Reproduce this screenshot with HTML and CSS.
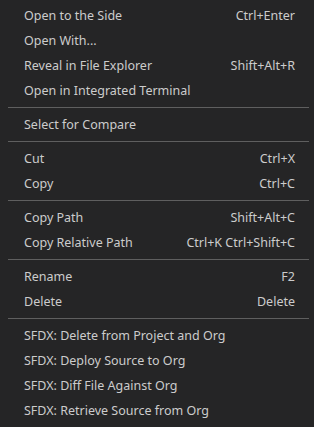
FILE: index.html
```html
<!DOCTYPE html>
<html>
<head>
<meta charset="utf-8">
<link rel="stylesheet" href="styles.css">
</head>
<body>
<div class="menu">
  <div class="item"><span class="label">Open to the Side</span><span class="key">Ctrl+Enter</span></div>
  <div class="item"><span class="label">Open With...</span></div>
  <div class="item"><span class="label">Reveal in File Explorer</span><span class="key">Shift+Alt+R</span></div>
  <div class="item"><span class="label">Open in Integrated Terminal</span></div>
  <div class="sep"></div>
  <div class="item"><span class="label">Select for Compare</span></div>
  <div class="sep"></div>
  <div class="item"><span class="label">Cut</span><span class="key">Ctrl+X</span></div>
  <div class="item"><span class="label">Copy</span><span class="key">Ctrl+C</span></div>
  <div class="sep"></div>
  <div class="item"><span class="label">Copy Path</span><span class="key">Shift+Alt+C</span></div>
  <div class="item"><span class="label">Copy Relative Path</span><span class="key">Ctrl+K Ctrl+Shift+C</span></div>
  <div class="sep"></div>
  <div class="item"><span class="label">Rename</span><span class="key">F2</span></div>
  <div class="item"><span class="label">Delete</span><span class="key">Delete</span></div>
  <div class="sep"></div>
  <div class="item"><span class="label">SFDX: Delete from Project and Org</span></div>
  <div class="item"><span class="label">SFDX: Deploy Source to Org</span></div>
  <div class="item"><span class="label">SFDX: Diff File Against Org</span></div>
  <div class="item"><span class="label">SFDX: Retrieve Source from Org</span></div>
</div>
</body>
</html>
```

FILE: styles.css
```css
html, body {
  margin: 0;
  padding: 0;
  background: #252526;
}
body {
  width: 314px;
  height: 427px;
  overflow: hidden;
}
.menu {
  display: flex;
  flex-direction: column;
  padding: 3px 0 4px 0;
  font-family: "Noto Sans", "Open Sans", sans-serif;
  font-size: 12.5px;
  color: #cccccc;
}
.item {
  height: 25px;
  display: flex;
  align-items: center;
  justify-content: space-between;
  padding: 0 19px 0 24px;
  white-space: nowrap;
}
.key {
  margin-left: 16px;
}
.sep {
  height: 1px;
  background: #5f5f5f;
  margin: 4px 5px 4px 8px;
}
```
